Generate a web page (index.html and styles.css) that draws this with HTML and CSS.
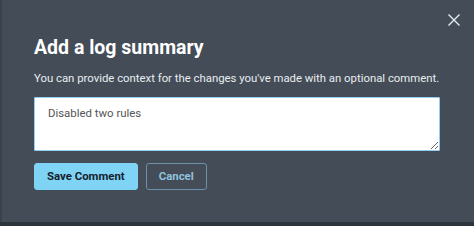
FILE: index.html
```html
<!DOCTYPE html>
<html lang="en">

<head>
  <meta charset="UTF-8">
  <title>Add a log summary</title>
  <link rel="stylesheet" href="styles.css">
</head>

<body>
  <div class="m-dialog">
    <a href="javascript:;" class="close" title="Close">
      <svg width="14" height="14" viewBox="0 0 14 14">
        <path d="M1.5 1.5L12.5 12.5M12.5 1.5L1.5 12.5" stroke="#e6ebef" stroke-width="1.4" fill="none" />
      </svg>
    </a>
    <h2 class="title">Add a log summary</h2>
    <p class="desc">You can provide context for the changes you've made with an optional comment.</p>
    <textarea class="comment">Disabled two rules</textarea>
    <div class="actions">
      <span class="btn btn-primary">Save Comment</span>
      <span class="btn btn-ghost">Cancel</span>
    </div>
  </div>
</body>

</html>
```

FILE: styles.css
```css
* {
  margin: 0;
  padding: 0;
  box-sizing: border-box;
}

html,
body {
  width: 100%;
  height: 100%;
}

body {
  background-color: #2d343c;
  font-family: Roboto, "Liberation Sans", sans-serif;
}

.m-dialog {
  position: relative;
  height: 222px;
  background-color: #434c57;
  border-left: 2px solid #3a424c;
  padding: 36px 32px 0 32px;
}

.close {
  position: absolute;
  top: 13px;
  right: 13px;
  display: block;
  width: 14px;
  height: 14px;
}

.close svg {
  display: block;
}

.title {
  font-size: 19.5px;
  line-height: 23px;
  font-weight: 700;
  color: #fff;
}

.desc {
  margin-top: 12px;
  font-size: 11.35px;
  line-height: 15px;
  color: #e8ecef;
  white-space: nowrap;
}

.comment {
  display: block;
  width: 406px;
  height: 54px;
  margin-top: 11px;
  padding: 8px 13px;
  border: 1px solid #8fcff0;
  border-radius: 1px;
  background-color: #fff;
  font-family: Roboto, "Liberation Sans", sans-serif;
  font-size: 11.4px;
  line-height: 15px;
  color: #555;
  outline: none;
}

.actions {
  display: flex;
  gap: 8px;
  margin-top: 12px;
}

.btn {
  display: block;
  height: 27px;
  line-height: 25px;
  padding: 0 12px;
  border: 1px solid transparent;
  border-radius: 3px;
  font-size: 11.4px;
  font-weight: 700;
  white-space: nowrap;
  cursor: pointer;
}

.btn-primary {
  background-color: #7fd4f6;
  border-color: #7fd4f6;
  color: #16212c;
}

.btn-ghost {
  border-color: #6a93aa;
  color: #8fc3dc;
}
```
